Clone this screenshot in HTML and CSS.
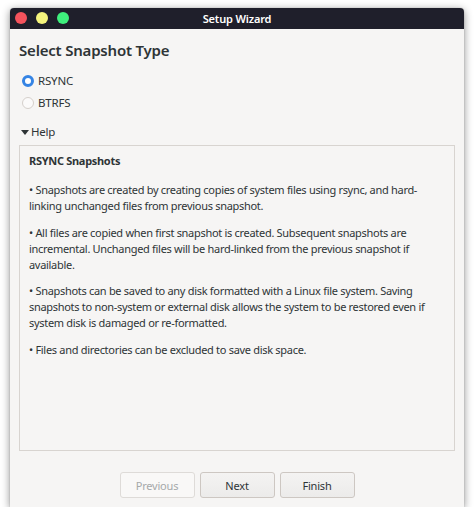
FILE: index.html
```html
<!DOCTYPE html>
<html>
<head>
<meta charset="utf-8">
<link rel="stylesheet" href="styles.css">
</head>
<body>
<div class="window">
  <div class="titlebar">
    <div class="lights">
      <span class="light red"></span>
      <span class="light yellow"></span>
      <span class="light green"></span>
    </div>
    <div class="title">Setup Wizard</div>
  </div>
  <div class="content">
    <h1 class="heading">Select Snapshot Type</h1>
    <div class="radios">
      <label class="radio"><span class="dot checked"></span>RSYNC</label>
      <label class="radio"><span class="dot"></span>BTRFS</label>
    </div>
    <div class="expander"><span class="tri"></span>Help</div>
    <div class="helpbox">
      <p class="htitle">RSYNC Snapshots</p>
      <p>• Snapshots are created by creating copies of system files using rsync, and hard-linking unchanged files from previous snapshot.</p>
      <p>• All files are copied when first snapshot is created. Subsequent snapshots are incremental. Unchanged files will be hard-linked from the previous snapshot if available.</p>
      <p>• Snapshots can be saved to any disk formatted with a Linux file system. Saving snapshots to non-system or external disk allows the system to be restored even if system disk is damaged or re-formatted.</p>
      <p>• Files and directories can be excluded to save disk space.</p>
    </div>
    <div class="buttons">
      <button class="btn disabled">Previous</button>
      <button class="btn">Next</button>
      <button class="btn">Finish</button>
    </div>
  </div>
</div>
</body>
</html>
```
FILE: styles.css
```css
html, body {
  margin: 0;
  padding: 0;
  background: #ffffff;
}
body {
  padding: 8px 10px 0 10px;
  font-family: "Noto Sans", "Open Sans", sans-serif;
  color: #2e3436;
}
.window {
  width: 454px;
  height: 499px;
  background: #f6f5f4;
  border-radius: 4px 4px 0 0;
  box-shadow: 0 2px 8px rgba(0,0,0,0.45), 0 0 1px rgba(0,0,0,0.4);
  display: flex;
  flex-direction: column;
  overflow: hidden;
}
.titlebar {
  height: 21px;
  background: #1f1f2b;
  position: relative;
  display: flex;
  align-items: center;
  justify-content: center;
  flex: none;
}
.lights {
  position: absolute;
  left: 5px;
  top: 4px;
  display: flex;
  gap: 9px;
}
.light {
  width: 12px;
  height: 12px;
  border-radius: 50%;
  display: block;
}
.red { background: #f5535d; }
.yellow { background: #f5f47d; }
.green { background: #3ff07d; }
.title {
  color: #ffffff;
  font-size: 11px;
  font-weight: 600;
  letter-spacing: -0.15px;
}
.content {
  flex: 1;
  display: flex;
  flex-direction: column;
  padding: 0 9px;
}
.heading {
  margin: 10px 0 0 0;
  font-size: 15px;
  font-weight: 600;
  letter-spacing: -0.2px;
  line-height: 22px;
  color: #2e3436;
}
.radios {
  margin-top: 11px;
  display: flex;
  flex-direction: column;
  gap: 4px;
}
.radio {
  display: flex;
  align-items: center;
  font-size: 11.5px;
  letter-spacing: -0.2px;
  line-height: 18px;
  gap: 4px;
  margin-left: 3px;
}
.dot {
  width: 10px;
  height: 10px;
  border-radius: 50%;
  border: 1px solid #d5d0cc;
  background: #fbfafa;
  box-sizing: content-box;
}
.dot.checked {
  width: 6px;
  height: 6px;
  border: 3px solid #3584e4;
  background: #ffffff;
}
.expander {
  margin-top: 11px;
  display: flex;
  align-items: center;
  font-size: 11.5px;
  letter-spacing: -0.2px;
  line-height: 18px;
  gap: 2px;
  margin-left: 2px;
}
.tri {
  width: 0;
  height: 0;
  border-left: 4px solid transparent;
  border-right: 4px solid transparent;
  border-top: 5px solid #2e3436;
}
.helpbox {
  margin-top: 4px;
  height: 306px;
  border: 1px solid #d8d4d0;
  background: #f6f5f4;
  padding: 7px 9px;
  box-sizing: border-box;
  font-size: 11px;
  letter-spacing: -0.3px;
  line-height: 16px;
}
.helpbox p {
  margin: 0 0 10.5px 0;
}
.helpbox .htitle {
  font-weight: 700;
  margin-bottom: 13px;
}
.buttons {
  margin-top: 21px;
  display: flex;
  justify-content: center;
  gap: 5px;
}
.btn {
  width: 75px;
  height: 26px;
  border: 1px solid #cdc7c2;
  border-radius: 3px;
  background: linear-gradient(#f4f3f2, #ecebea);
  font-family: inherit;
  font-size: 11px;
  letter-spacing: -0.2px;
  color: #2e3436;
  padding: 0;
}
.btn.disabled {
  color: #a6a9aa;
  background: #f9f8f7;
  border-color: #dedbd8;
}
```
